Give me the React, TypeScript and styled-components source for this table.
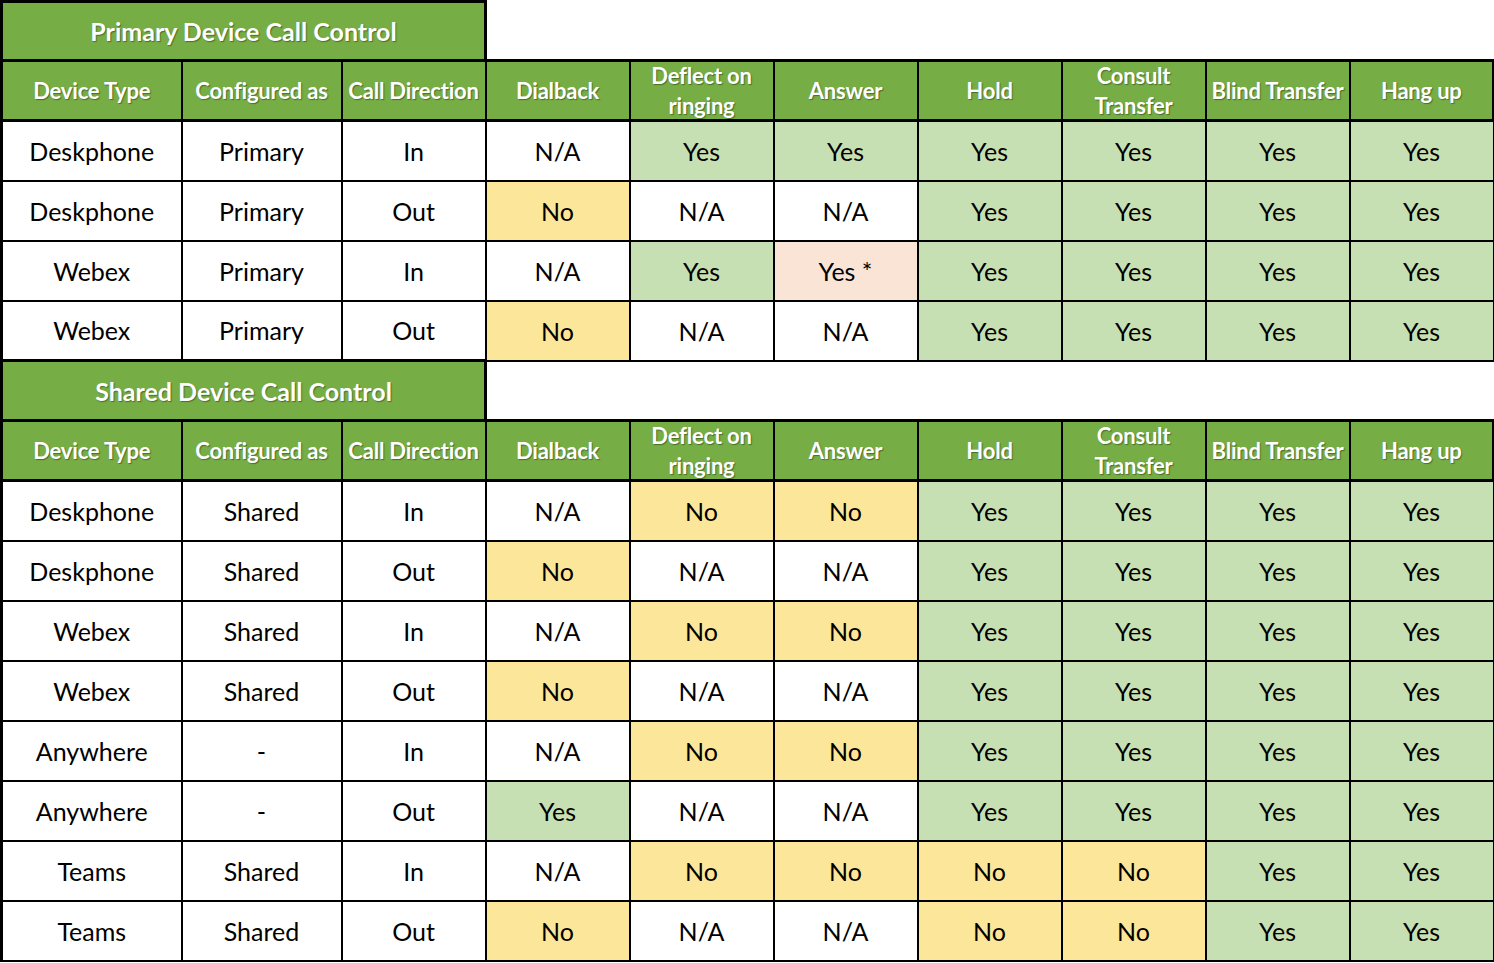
import React from "react";
import styled, { createGlobalStyle } from "styled-components";

const Global = createGlobalStyle`
  html, body { margin: 0; padding: 0; background: #ffffff; }
  body { font-family: "Lato", "Open Sans", sans-serif; }
`;

type Tone = "white" | "green" | "yellow" | "peach";

const toneColor: Record<Tone, string> = {
  white: "#ffffff",
  green: "#c6e0b4",
  yellow: "#fce699",
  peach: "#f9e4d6",
};

const Table = styled.table`
  border-collapse: collapse;
  table-layout: fixed;
  width: 1494px;
  font-family: "Lato", "Open Sans", sans-serif;
`;

const Row = styled.tr<{ $h: number }>`
  height: ${(p) => p.$h}px;
`;

const TitleCell = styled.th`
  background: #76ad44;
  border: 3px solid #000;
  color: #ffffff;
  font-size: 25px;
  font-weight: 700;
  line-height: 30px;
  text-align: center;
  vertical-align: middle;
  padding: 0;
  text-shadow: 1px 1px 1px rgba(40, 60, 20, 0.55);
`;

const BlankCell = styled.td`
  background: #ffffff;
  border: none;
  padding: 0;
`;

const HeadCell = styled.th`
  background: #76ad44;
  border-top: 3px solid #000;
  border-bottom: 3px solid #000;
  border-left: 2px solid #000;
  border-right: 2px solid #000;
  color: #ffffff;
  font-size: 22px;
  font-weight: 700;
  text-align: center;
  vertical-align: middle;
  padding: 0;
  letter-spacing: -0.2px;
  white-space: nowrap;
  overflow: hidden;
  text-shadow: 1px 1px 1px rgba(40, 60, 20, 0.55);
  &:first-child { border-left-width: 3px; }
  &:last-child { border-right-width: 3px; }
`;

const HeadLabel = styled.span`
  display: flex;
  flex-direction: column;
  justify-content: center;
  align-items: center;
  height: 54px;
  line-height: 30px;
`;

const DataCell = styled.td<{ $tone: Tone }>`
  background: ${(p) => toneColor[p.$tone]};
  border: 2px solid #000;
  color: #000;
  font-size: 25px;
  font-weight: 400;
  line-height: 30px;
  text-align: center;
  vertical-align: middle;
  padding: 0;
  &:first-child { border-left-width: 3px; }
`;

const widths = [180, 160, 144, 144, 144, 144, 144, 144, 144, 144];

const headers: string[][] = [
  ["Device Type"],
  ["Configured as"],
  ["Call Direction"],
  ["Dialback"],
  ["Deflect on", "ringing"],
  ["Answer"],
  ["Hold"],
  ["Consult", "Transfer"],
  ["Blind Transfer"],
  ["Hang up"],
];

type Cell = [string, Tone];
const W = (t: string): Cell => [t, "white"];
const G = (t: string): Cell => [t, "green"];
const Y = (t: string): Cell => [t, "yellow"];
const P = (t: string): Cell => [t, "peach"];

const primaryRows: Cell[][] = [
  [W("Deskphone"), W("Primary"), W("In"), W("N/A"), G("Yes"), G("Yes"), G("Yes"), G("Yes"), G("Yes"), G("Yes")],
  [W("Deskphone"), W("Primary"), W("Out"), Y("No"), W("N/A"), W("N/A"), G("Yes"), G("Yes"), G("Yes"), G("Yes")],
  [W("Webex"), W("Primary"), W("In"), W("N/A"), G("Yes"), P("Yes *"), G("Yes"), G("Yes"), G("Yes"), G("Yes")],
  [W("Webex"), W("Primary"), W("Out"), Y("No"), W("N/A"), W("N/A"), G("Yes"), G("Yes"), G("Yes"), G("Yes")],
];

const sharedRows: Cell[][] = [
  [W("Deskphone"), W("Shared"), W("In"), W("N/A"), Y("No"), Y("No"), G("Yes"), G("Yes"), G("Yes"), G("Yes")],
  [W("Deskphone"), W("Shared"), W("Out"), Y("No"), W("N/A"), W("N/A"), G("Yes"), G("Yes"), G("Yes"), G("Yes")],
  [W("Webex"), W("Shared"), W("In"), W("N/A"), Y("No"), Y("No"), G("Yes"), G("Yes"), G("Yes"), G("Yes")],
  [W("Webex"), W("Shared"), W("Out"), Y("No"), W("N/A"), W("N/A"), G("Yes"), G("Yes"), G("Yes"), G("Yes")],
  [W("Anywhere"), W("-"), W("In"), W("N/A"), Y("No"), Y("No"), G("Yes"), G("Yes"), G("Yes"), G("Yes")],
  [W("Anywhere"), W("-"), W("Out"), G("Yes"), W("N/A"), W("N/A"), G("Yes"), G("Yes"), G("Yes"), G("Yes")],
  [W("Teams"), W("Shared"), W("In"), W("N/A"), Y("No"), Y("No"), Y("No"), Y("No"), G("Yes"), G("Yes")],
  [W("Teams"), W("Shared"), W("Out"), Y("No"), W("N/A"), W("N/A"), Y("No"), Y("No"), G("Yes"), G("Yes")],
];

function Section({ title, rows, titleH }: { title: string; rows: Cell[][]; titleH: number }) {
  return (
    <>
      <Row $h={titleH}>
        <TitleCell colSpan={3}>{title}</TitleCell>
        <BlankCell colSpan={7} />
      </Row>
      <Row $h={60}>
        {headers.map((lines, i) => (
          <HeadCell key={i}>
            <HeadLabel>
              {lines.map((l, li) => (
                <span key={li}>{l}</span>
              ))}
            </HeadLabel>
          </HeadCell>
        ))}
      </Row>
      {rows.map((r, ri) => (
        <Row key={ri} $h={60}>
          {r.map(([text, tone], ci) => (
            <DataCell key={ci} $tone={tone}>
              {text}
            </DataCell>
          ))}
        </Row>
      ))}
    </>
  );
}

export default function App() {
  return (
    <>
      <Global />
      <Table>
        <colgroup>
          {widths.map((w, i) => (
            <col key={i} style={{ width: w }} />
          ))}
        </colgroup>
        <tbody>
          <Section title="Primary Device Call Control" rows={primaryRows} titleH={59} />
          <Section title="Shared Device Call Control" rows={sharedRows} titleH={60} />
        </tbody>
      </Table>
    </>
  );
}
